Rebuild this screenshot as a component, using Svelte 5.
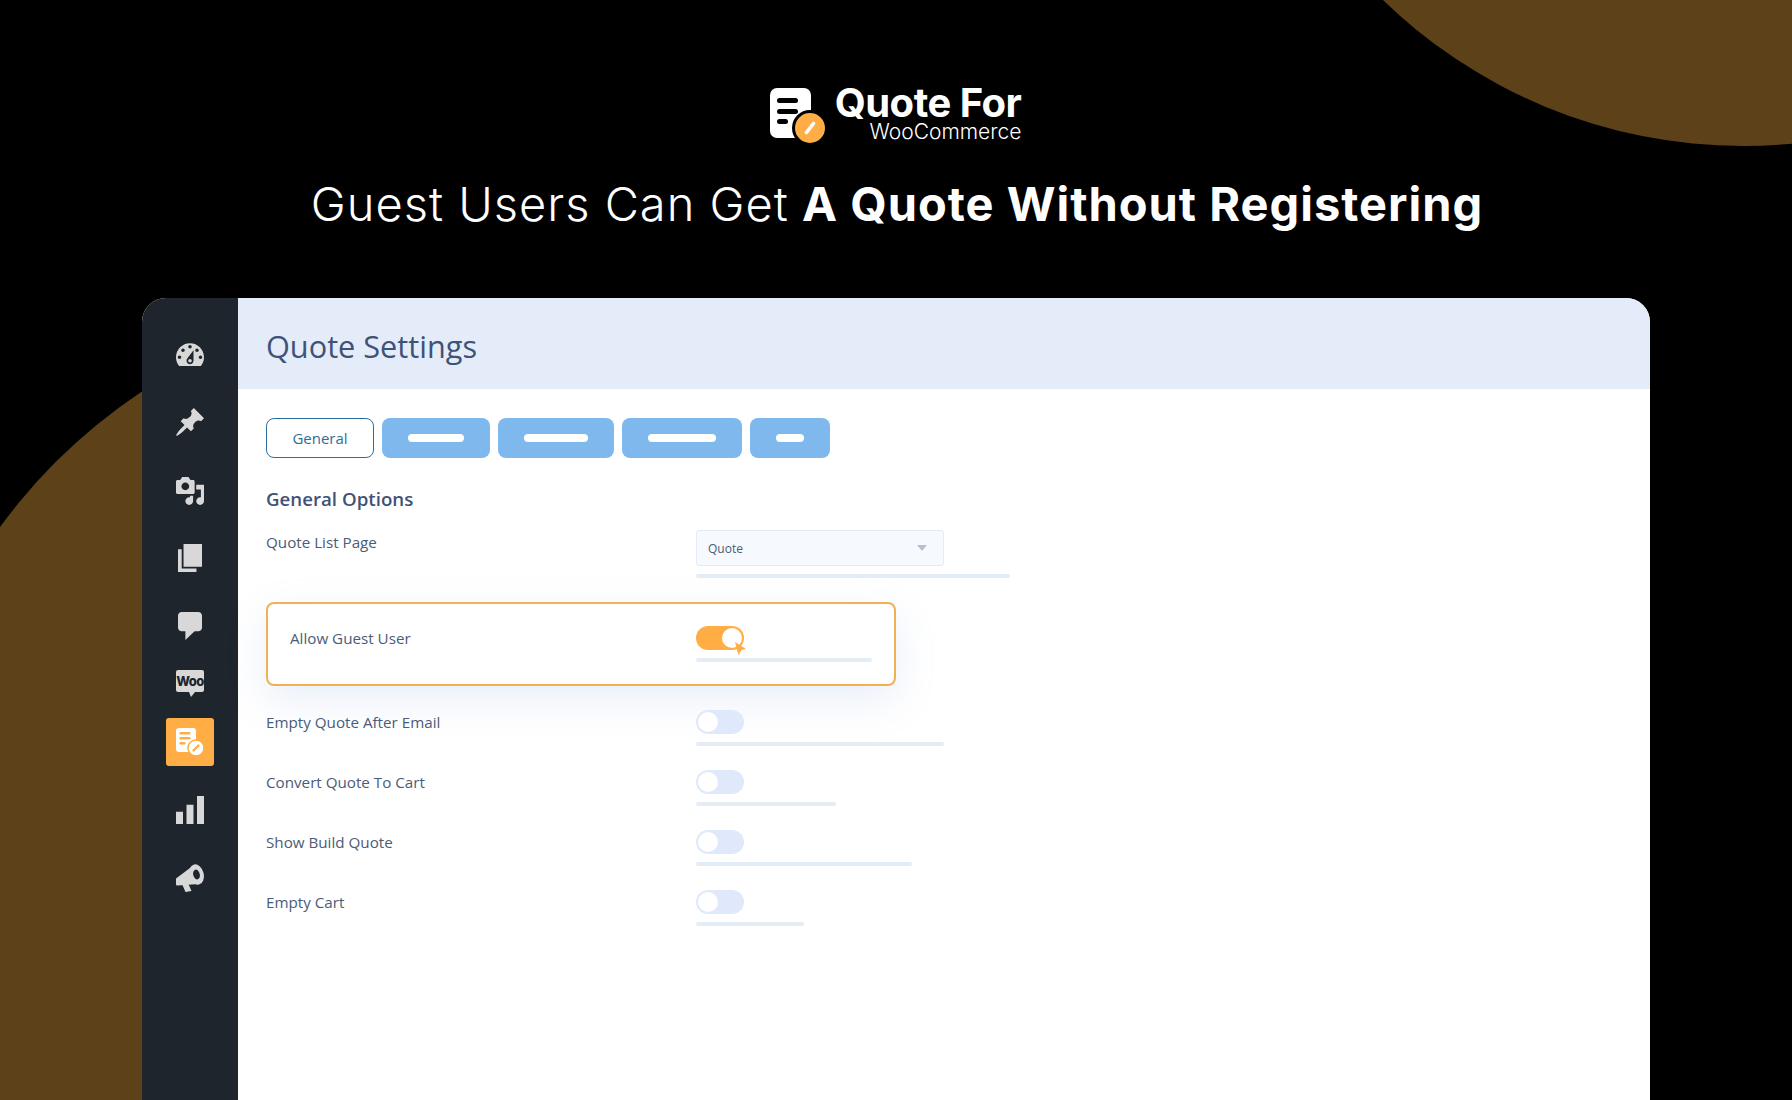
<script>
  const tabs = [
    { w: 108, bar: 56 },
    { w: 116, bar: 64 },
    { w: 120, bar: 68 },
    { w: 80, bar: 28 }
  ];
  const rows = [
    { label: 'Empty Quote After Email', bar: 248 },
    { label: 'Convert Quote To Cart', bar: 140 },
    { label: 'Show Build Quote', bar: 216 },
    { label: 'Empty Cart', bar: 108 }
  ];
</script>

<div class="page">
  <div class="blob blob-top"></div>
  <div class="blob blob-left"></div>

  <header class="hero">
    <div class="logo">
      <svg class="logo-mark" viewBox="0 0 60 60" aria-hidden="true">
        <rect x="2" y="2" width="41" height="50" rx="7" fill="#fff" />
        <rect x="9" y="12" width="21" height="5" rx="2.5" fill="#000" />
        <rect x="9" y="23" width="21" height="5" rx="2.5" fill="#000" />
        <rect x="9" y="33" width="11" height="5" rx="2.5" fill="#000" />
        <circle cx="42" cy="42" r="16.5" fill="#ffad44" stroke="#000" stroke-width="3" />
        <path d="M38.5 46.500 L45.500 37.500" stroke="#fff" stroke-width="3.600" stroke-linecap="round" />
      </svg>
      <div class="logo-text">
        <div class="logo-main">Quote For</div>
        <div class="logo-sub">WooCommerce</div>
      </div>
    </div>
    <h1>Guest Users Can Get <strong>A Quote Without Registering</strong></h1>
  </header>

  <section class="window">
    <aside class="rail">
      <svg class="ico ic-1" viewBox="2 3 16 13"><path d="M3.760 16h12.480c1.100-1.370 1.760-3.110 1.760-5 0-4.420-3.580-8-8-8s-8 3.580-8 8c0 1.890.66 3.630 1.760 5zM10 4c.55 0 1 .45 1 1s-.45 1-1 1-1-.45-1-1 .45-1 1-1zM6 6c.55 0 1 .45 1 1s-.45 1-1 1-1-.45-1-1 .45-1 1-1zm8 0c.55 0 1 .45 1 1s-.45 1-1 1-1-.45-1-1 .45-1 1-1zm-5.370 5.550L12 7v6c0 1.100-.9 2-2 2s-2-.9-2-2c0-.57.24-1.080.63-1.450zM4 10c.55 0 1 .45 1 1s-.45 1-1 1-1-.45-1-1 .45-1 1-1zm12 0c.55 0 1 .45 1 1s-.45 1-1 1-1-.45-1-1 .45-1 1-1zm-5 3c0-.55-.45-1-1-1s-1 .45-1 1 .45 1 1 1 1-.45 1-1z"/></svg>
      <svg class="ico ic-2" viewBox="1.200 1.200 17.400 17.400"><path d="M10.440 3.020l1.820-1.820 6.360 6.350-1.830 1.820c-1.050-.68-2.480-.57-3.410.36l-.75.75c-.92.93-1.040 2.350-.35 3.410l-1.830 1.820-2.410-2.410-2.800 2.790c-.42.42-3.380 2.710-3.800 2.290s1.860-3.390 2.280-3.810l2.790-2.790L4.100 9.360l1.830-1.820c1.050.69 2.480.57 3.400-.36l.75-.75c.93-.92 1.050-2.350.36-3.410z"/></svg>
      <svg class="ico ic-3" viewBox="1 1 18 18"><path d="M13 11V4c0-.55-.45-1-1-1h-1.670L9 1H5L3.670 3H2c-.55 0-1 .45-1 1v7c0 .55.45 1 1 1h10c.55 0 1-.45 1-1zM7 4.500c1.380 0 2.500 1.120 2.500 2.500S8.380 9.500 7 9.500 4.500 8.380 4.500 7 5.620 4.500 7 4.500zM14 6h5v10.500c0 1.380-1.120 2.500-2.500 2.500S14 17.880 14 16.500s1.120-2.500 2.500-2.500c.17 0 .34.02.5.05V9h-3V6zm-4 8.050V13h2v3.500c0 1.380-1.120 2.500-2.500 2.500S7 17.880 7 16.500 8.120 14 9.500 14c.17 0 .34.02.5.05z"/></svg>
      <svg class="ico ic-4" viewBox="3 2 13 16" preserveAspectRatio="none"><path d="M6 15V2h10v13H6zm-1 1h8v2H3V5h2v11z"/></svg>
      <svg class="ico ic-5" viewBox="3 2 13 16" preserveAspectRatio="none"><path d="M5 2h9c1.100 0 2 .9 2 2v7c0 1.100-.9 2-2 2h-2l-5 5v-5H5c-1.100 0-2-.9-2-2V4c0-1.100.9-2 2-2z"/></svg>
      <div class="woo-wrap">
        <span class="woo">Woo</span>
      </div>
      <div class="rail-active">
        <svg class="active-ico" viewBox="0 0 28 28">
          <rect x="0" y="0" width="20" height="24" rx="3" fill="#fff" />
          <rect x="3.500" y="4" width="11" height="2.400" rx="1.200" fill="#ffad44" />
          <rect x="3.500" y="9" width="11" height="2.400" rx="1.200" fill="#ffad44" />
          <rect x="3.500" y="14" width="6" height="2.400" rx="1.200" fill="#ffad44" />
          <circle cx="20" cy="20" r="8" fill="#fff" stroke="#ffad44" stroke-width="1.500" />
          <path d="M17.500 22.500L22.500 17.500" stroke="#ffad44" stroke-width="2.400" stroke-linecap="round" />
        </svg>
      </div>
      <svg class="ico ic-8" viewBox="2 2 16 16"><path d="M18 18V2h-4v16h4zm-6 0V7H8v11h4zm-6 0v-7H2v7h4z"/></svg>
      <svg class="ico ic-9" viewBox="0 0 28 28">
        <path d="M0 14.500 L18 1 L23 20 L1.500 21.500 C.5 21.500 0 21 0 20z"/>
        <path d="M6 20 L12 19 L15.500 27 L9.500 28z"/>
        <ellipse cx="20.500" cy="10.500" rx="7.200" ry="10.400" transform="rotate(-14 20.500 10.500)"/>
        <ellipse cx="20.500" cy="10.500" rx="3.300" ry="5" transform="rotate(-14 20.500 10.500)" fill="#1e252c"/>
      </svg>
    </aside>

    <div class="main">
      <div class="head">Quote Settings</div>
      <div class="body">
        <div class="tabs">
          <button class="tab current">General</button>
          {#each tabs as t}
            <div class="tab filled" style="width:{t.w}px"><span class="tab-bar" style="width:{t.bar}px"></span></div>
          {/each}
        </div>

        <h2>General Options</h2>

        <div class="opt select-row">
          <span class="label">Quote List Page</span>
          <div class="field">
            <div class="select"><span>Quote</span><i class="caret"></i></div>
            <div class="hint" style="width:314px"></div>
          </div>
        </div>

        <div class="card">
          <span class="label">Allow Guest User</span>
          <div class="field">
            <div class="toggle on">
              <span class="knob"></span>
              <svg class="cursor" viewBox="0 0 12 14"><path d="M0 0l11 7-4.500 1L3.500 13z" fill="#ffad44"/></svg>
            </div>
            <div class="hint" style="width:176px"></div>
          </div>
        </div>

        {#each rows as r}
          <div class="opt toggle-row">
            <span class="label">{r.label}</span>
            <div class="field">
              <div class="toggle"><span class="knob"></span></div>
              <div class="hint" style="width:{r.bar}px"></div>
            </div>
          </div>
        {/each}
      </div>
    </div>
  </section>
</div>

<style>
  :global(body) { margin: 0; background: #000; }
  .page {
    position: relative;
    width: 1792px;
    height: 1100px;
    overflow: hidden;
    background: #000;
    font-family: "Open Sans", "Noto Sans", sans-serif;
  }
  .blob { position: absolute; border-radius: 50%; background: #5c4119; }
  .blob-top { left: 1226px; top: -888px; width: 1034px; height: 1034px; }
  .blob-left { left: -107px; top: 299px; width: 1112px; height: 1112px; }

  .hero {
    position: relative;
    display: flex;
    flex-direction: column;
    align-items: center;
    padding-top: 82px;
  }
  .logo { display: flex; align-items: flex-start; gap: 7px; height: 66px; margin-left: -3px; }
  .logo-mark { width: 60px; height: 60px; margin-top: 4px; }
  .logo-text { display: flex; flex-direction: column; align-items: flex-end; padding-top: 1px; }
  .logo-main {
    font: 700 40px/39px Inter, sans-serif;
    color: #fff;
    letter-spacing: -0.5px;
  }
  .logo-sub {
    font: 300 21px/20px Inter, sans-serif;
    color: #fff;
  }
  h1 {
    margin: 27px 0 0 2px;
    font: 300 47px/58px Inter, sans-serif;
    letter-spacing: 1px;
    color: #fff;
    white-space: nowrap;
  }
  h1 strong { font-weight: 700; margin-left: -1px; }

  .window {
    position: relative;
    display: flex;
    width: 1508px;
    height: 802px;
    margin: 65px 0 0 142px;
    border-radius: 24px 24px 0 0;
    overflow: hidden;
    background: #fff;
  }
  .rail {
    flex: 0 0 96px;
    background: #1e252c;
    display: flex;
    flex-direction: column;
    align-items: center;
  }
  .ico { display: block; flex: none; width: 28px; height: 28px; fill: #d8d8d8; }
  .ic-1 { margin-top: 44px; height: 25px; }
  .ic-2 { margin-top: 41px; }
  .ic-3 { margin-top: 41px; }
  .ic-4 { margin-top: 39px; width: 24px; }
  .ic-5 { margin-top: 40px; width: 24px; }
  .woo-wrap {
    flex: none;
    margin-top: 30px;
    width: 28px;
    height: 22px;
    border-radius: 2px;
    background: #d8d8d8;
    display: flex;
    align-items: center;
    justify-content: center;
    position: relative;
  }
  .woo-wrap::after {
    content: "";
    position: absolute;
    left: 13px;
    bottom: -5px;
    border-left: 2px solid transparent;
    border-right: 4px solid transparent;
    border-top: 5px solid #d8d8d8;
  }
  .woo { font: 800 13px/1 Inter, sans-serif; color: #1e252c; letter-spacing: -0.6px; }
  .rail-active {
    flex: none;
    margin-top: 26px;
    width: 48px;
    height: 48px;
    border-radius: 3px;
    background: #ffad44;
    display: flex;
    align-items: center;
    justify-content: center;
  }
  .active-ico { width: 28px; height: 28px; }
  .ic-8 { margin-top: 30px; }
  .ic-9 { margin-top: 40px; }

  .main { flex: 1; min-width: 0; }
  .head {
    box-sizing: border-box;
    height: 91px;
    background: #e4ecf9;
    padding: 4px 0 0 28px;
    display: flex;
    align-items: center;
    font-size: 30.700px;
    color: #3f5277;
  }
  .body { padding: 29px 32px 0 28px; position: relative; }
  .tabs { display: flex; gap: 8px; }
  .tab {
    height: 40px;
    box-sizing: border-box;
    border-radius: 8px;
    display: flex;
    align-items: center;
    justify-content: center;
  }
  .tab.current {
    width: 108px;
    background: #fff;
    border: 1px solid #2c6e9c;
    font: 400 15px "Open Sans", sans-serif;
    color: #2c6e9c;
  }
  .tab.filled { background: #7fb8ec; }
  .tab-bar { height: 8px; border-radius: 4px; background: #fff; }
  h2 {
    margin: 27px 0 0;
    font: 600 18.700px/28px "Open Sans", sans-serif;
    color: #3f5277;
  }
  .opt { display: flex; }
  .label { flex: 0 0 430px; font-size: 15.200px; line-height: 22px; color: #4b5b78; }
  .field { display: flex; flex-direction: column; }
  .select-row { margin-top: 17px; }
  .select-row .label { margin-top: 1px; }
  .select {
    box-sizing: border-box;
    width: 248px;
    height: 36px;
    border: 1px solid #e4ecf9;
    border-radius: 3px;
    background: #f6f9fe;
    display: flex;
    align-items: center;
    justify-content: space-between;
    padding: 0 16px 0 11px;
    font-size: 12px;
    color: #4b5b78;
  }
  .caret {
    width: 0; height: 0;
    border-left: 5px solid transparent;
    border-right: 5px solid transparent;
    border-top: 6px solid #b9bfce;
  }
  .hint { height: 4px; border-radius: 2px; background: #e4ecf6; margin-top: 8px; }
  .card {
    box-sizing: border-box;
    display: flex;
    width: 630px;
    height: 84px;
    margin: 24px 0 0;
    padding: 22px 0 0 22px;
    border: 2px solid #f0b155;
    border-radius: 8px;
    background: #fff;
    box-shadow: 0 14px 40px rgba(120, 150, 220, 0.16);
  }
  .card .label { flex-basis: 406px; line-height: 24px; }
  .toggle {
    position: relative;
    width: 48px;
    height: 24px;
    border-radius: 12px;
    background: #dfe9fb;
  }
  .toggle .knob {
    position: absolute;
    left: 2px;
    top: 2px;
    width: 20px;
    height: 20px;
    border-radius: 50%;
    background: #fff;
  }
  .toggle.on { background: #ffad44; }
  .toggle.on .knob { left: 26px; }
  .cursor { position: absolute; left: 39px; top: 16px; width: 12px; height: 14px; }
  .toggle-row { height: 60px; }
  .toggle-row .label { line-height: 24px; }
  .card + .toggle-row { margin-top: 24px; }
</style>
